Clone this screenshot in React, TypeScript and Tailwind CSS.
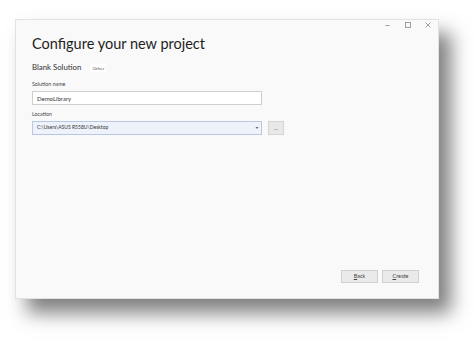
import React from "react";

export default function App() {
  return (
    <div className="w-[474px] h-[343px] bg-white relative overflow-hidden" style={{ fontFamily: 'Lato, "Noto Sans", sans-serif' }}>
      <div className="absolute left-[15px] top-[19px] w-[424px] h-[280px] bg-[#f9f9f9] border border-[#e2e2e2] shadow-[12px_14px_18px_rgba(0,0,0,0.5)] flex flex-col">
        <div className="flex justify-end items-center h-[10px] pr-[6px] gap-[12px]">
          <svg width="8" height="8" viewBox="0 0 8 8"><path d="M1.5 4.5h4" stroke="#888" strokeWidth="0.8" /></svg>
          <svg width="8" height="8" viewBox="0 0 8 8"><rect x="1.5" y="1.5" width="5" height="5" fill="none" stroke="#888" strokeWidth="0.8" /></svg>
          <svg width="8" height="8" viewBox="0 0 8 8"><path d="M1.5 1.5l5 5M6.5 1.5l-5 5" stroke="#888" strokeWidth="0.8" /></svg>
        </div>
        <div className="pl-[16px] flex flex-col flex-1">
          <div className="text-[14.5px] leading-[22px] text-[#1e1e1e] mt-[3px]">Configure your new project</div>
          <div className="flex items-center mt-[6px] h-[14px]">
            <span className="text-[7.8px] text-[#333]">Blank Solution</span>
            <span className="ml-[9px] text-[4.6px] text-[#555] bg-white px-[2px] leading-[8px]">Other</span>
          </div>
          <div className="text-[5.3px] text-[#444] mt-[5px] leading-[8px]">Solution name</div>
          <div className="mt-[3px] w-[230px] h-[14px] bg-white border border-[#cfcfcf] flex items-center pl-[4px] text-[6px] text-[#333]">DemoLibrary</div>
          <div className="text-[5.3px] text-[#444] mt-[5px] leading-[8px]">Location</div>
          <div className="mt-[3px] flex items-center gap-[6px]">
            <div className="w-[230px] h-[14px] bg-[#eef2fb] border border-[#b9c7e6] flex items-center justify-between pl-[4px] pr-[2px] text-[5px] text-[#333]">
              <span>C:\Users\ASUS R558U\Desktop</span>
              <svg width="4" height="4" viewBox="0 0 4 4"><path d="M0.5 1l1.5 2 1.5-2z" fill="#666" /></svg>
            </div>
            <div className="w-[16px] h-[14px] bg-[#e8e8e8] border border-[#d6d6d6] flex items-center justify-center text-[6px] text-[#666] leading-none">...</div>
          </div>
          <div className="flex-1" />
          <div className="flex justify-end gap-[4px] pr-[19px] mb-[15px]">
            <div className="w-[37px] h-[13px] bg-[#eaeaea] border border-[#d0d0d0] flex items-center justify-center text-[5.5px] text-[#444]"><span><u>B</u>ack</span></div>
            <div className="w-[37px] h-[13px] bg-[#eaeaea] border border-[#d0d0d0] flex items-center justify-center text-[5.5px] text-[#444]"><span><u>C</u>reate</span></div>
          </div>
        </div>
      </div>
    </div>
  );
}
